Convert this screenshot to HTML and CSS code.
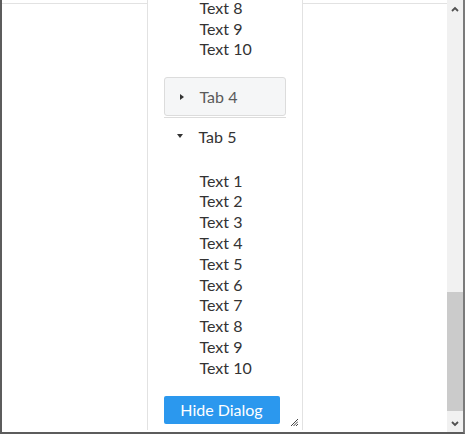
FILE: index.html
```html
<!DOCTYPE html>
<html>
<head>
<meta charset="utf-8">
<link rel="stylesheet" href="styles.css">
</head>
<body>
<div class="frame">
  <div class="viewport">
    <div class="panel">
      <div class="tab-body first">
        <div>Text 8</div>
        <div>Text 9</div>
        <div>Text 10</div>
      </div>
      <div class="tab-header hovered">
        <span class="tri-right"></span><span class="tab-label muted">Tab 4</span>
      </div>
      <div class="sep"></div>
      <div class="tab-header open">
        <span class="tri-down"></span><span class="tab-label">Tab 5</span>
      </div>
      <div class="tab-body second">
        <div>Text 1</div>
        <div>Text 2</div>
        <div>Text 3</div>
        <div>Text 4</div>
        <div>Text 5</div>
        <div>Text 6</div>
        <div>Text 7</div>
        <div>Text 8</div>
        <div>Text 9</div>
        <div>Text 10</div>
      </div>
      <button class="hide-btn">Hide Dialog</button>
      <svg class="grip" width="8" height="8" viewBox="0 0 8 8">
        <path d="M1 8 L8 1 M3.5 8 L8 3.5 M6 8 L8 6" stroke="#444" stroke-width="1" fill="none"/>
      </svg>
    </div>
  </div>
  <div class="scrollbar">
    <div class="sb-btn">
      <svg width="8" height="6" viewBox="0 0 8 6"><path d="M1 5 L4 2 L7 5" stroke="#505050" stroke-width="1.8" fill="none"/></svg>
    </div>
    <div class="sb-track">
      <div class="sb-thumb"></div>
    </div>
    <div class="sb-btn">
      <svg width="8" height="6" viewBox="0 0 8 6"><path d="M1 1 L4 4 L7 1" stroke="#505050" stroke-width="1.8" fill="none"/></svg>
    </div>
  </div>
</div>
</body>
</html>
```
FILE: styles.css
```css
html, body {
  margin: 0;
  padding: 0;
  background: #fff;
}
body {
  font-family: Lato, "Open Sans", sans-serif;
  font-size: 16px;
  color: #333;
}
.frame {
  width: 465px;
  height: 434px;
  box-sizing: border-box;
  border-left: 2px solid #5c5c5c;
  border-right: 2px solid #7a7a7a;
  border-bottom: 2px solid #5c5c5c;
  display: flex;
  overflow: hidden;
}
.viewport {
  flex: 1;
  position: relative;
  overflow: hidden;
  background: #fff;
}
.viewport::before {
  content: "";
  position: absolute;
  left: 0;
  right: 0;
  top: 3px;
  height: 1px;
  background: #e2e2e2;
}
.panel {
  position: relative;
  width: 156px;
  height: 100%;
  margin: 0 auto;
  box-sizing: border-box;
  border-left: 1px solid #e2e2e2;
  border-right: 1px solid #e2e2e2;
  padding: 0 16px;
  background: #fff;
}
.tab-body {
  padding-left: 36px;
  line-height: 20.8px;
}
.tab-body.first {
  margin-top: -2.2px;
  padding-bottom: 16.8px;
}
.tab-body.second {
  padding-top: 16.6px;
}
.tab-header {
  display: flex;
  align-items: center;
  box-sizing: border-box;
  height: 39px;
  padding-left: 15px;
}
.tab-header.hovered {
  background: #f5f6f7;
  border: 1px solid #dcdcdc;
  border-radius: 3px;
}
.tab-header.open {
  height: 36px;
  padding-left: 13px;
}
.sep {
  margin-top: 1px;
  height: 1px;
  background: #dcdcdc;
}
.tri-right {
  width: 0;
  height: 0;
  border-top: 3.5px solid transparent;
  border-bottom: 3.5px solid transparent;
  border-left: 4px solid #333;
  margin-right: 16px;
}
.tri-down {
  width: 0;
  height: 0;
  border-left: 3.5px solid transparent;
  border-right: 3.5px solid transparent;
  border-top: 4px solid #333;
  margin-right: 16px;
}
.tab-label {
  color: #333;
}
.tab-label.muted {
  color: #5a5a5a;
}
.hide-btn {
  display: block;
  margin-top: 17.4px;
  width: 116px;
  height: 28px;
  border: none;
  border-radius: 2px;
  background: #2b98ee;
  color: #fff;
  font-family: Lato, "Open Sans", sans-serif;
  font-size: 16px;
  padding: 0;
}
.grip {
  position: absolute;
  right: 4px;
  bottom: 4px;
}
.scrollbar {
  width: 16px;
  display: flex;
  flex-direction: column;
  background: #f1f1f1;
}
.sb-btn {
  height: 17px;
  display: flex;
  align-items: center;
  justify-content: center;
}
.sb-track {
  flex: 1;
  display: flex;
  flex-direction: column;
  justify-content: flex-end;
  padding-bottom: 4px;
}
.sb-thumb {
  height: 119px;
  background: #cbcbcb;
}
```
